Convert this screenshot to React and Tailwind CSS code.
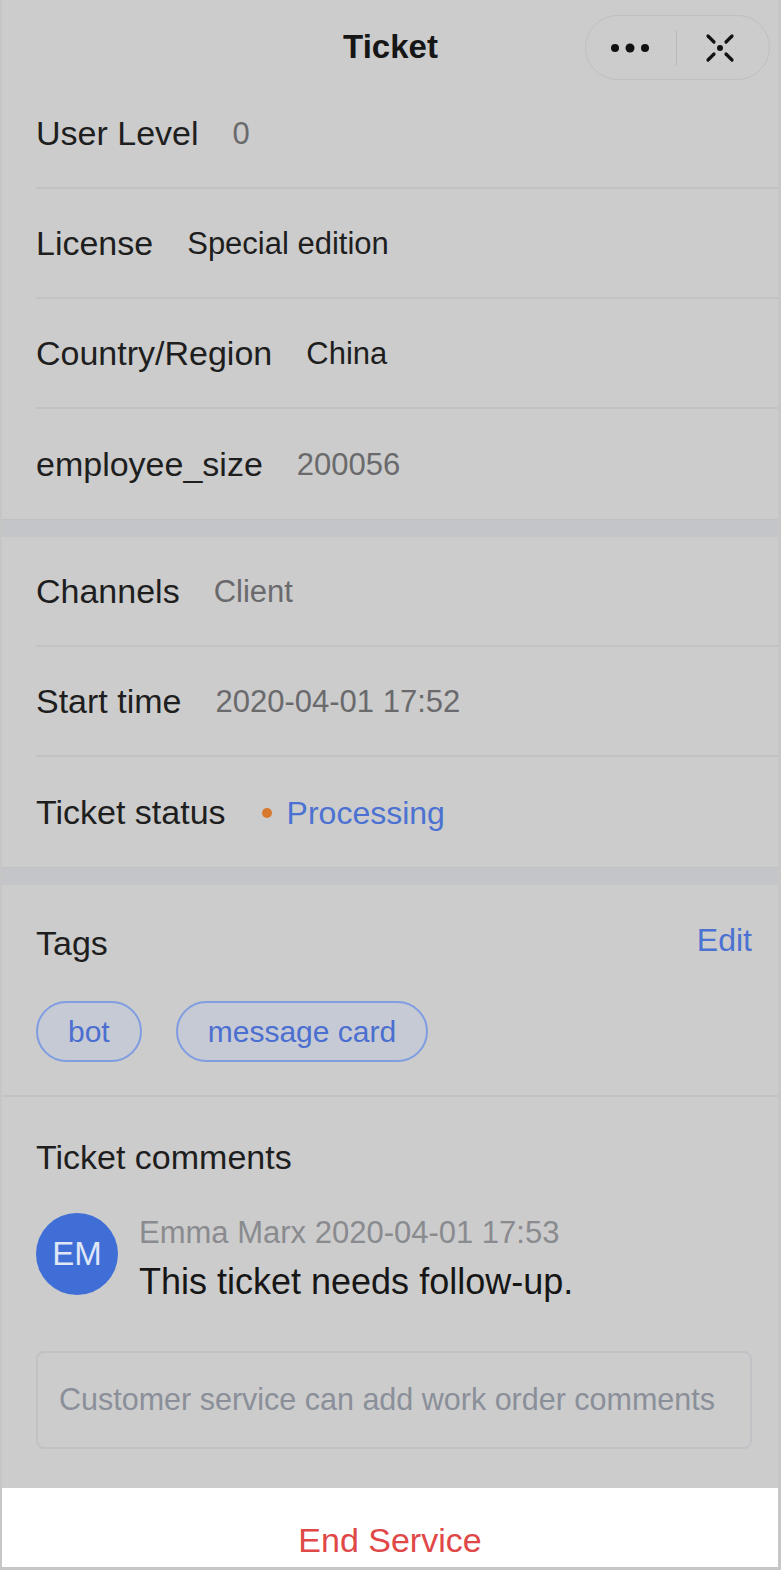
import React from 'react';

const FONT = { fontFamily: '"Liberation Sans", Arial, sans-serif' };

const infoRows = [
  { label: 'User Level', value: '0', tone: 'muted' },
  { label: 'License', value: 'Special edition', tone: 'dark' },
  { label: 'Country/Region', value: 'China', tone: 'dark' },
  { label: 'employee_size', value: '200056', tone: 'muted' },
];

const serviceRows = [
  { label: 'Channels', value: 'Client', tone: 'muted' },
  { label: 'Start time', value: '2020-04-01 17:52', tone: 'muted' },
  { label: 'Ticket status', value: 'Processing', tone: 'status' },
];

const Row = ({ label, value, tone, last }) => (
  <div className="ml-[34px] h-[110px] flex items-center">
    <div className={`flex items-center w-full h-full ${last ? '' : 'border-b-2 border-[#c0c2c6]'}`}>
      <span className="text-[34px] text-[#1e1e1e]">{label}</span>
      {tone === 'status' ? (
        <span className="ml-[36px] flex items-center pt-[2px]">
          <span className="w-[10px] h-[10px] rounded-full bg-[#d8782e]" />
          <span className="ml-[15px] text-[32px] text-[#4b72d2]">{value}</span>
        </span>
      ) : (
        <span
          className={`ml-[34px] pt-[2px] text-[31px] ${tone === 'dark' ? 'text-[#1e1e1e]' : 'text-[#6a6a6c]'}`}
        >
          {value}
        </span>
      )}
    </div>
  </div>
);

const Band = () => <div className="h-[18px] bg-[#c4c5c8] border-t border-[#bfc1c5]" />;

const MoreIcon = () => (
  <svg width="44" height="12" viewBox="0 0 44 12">
    <circle cx="6" cy="6" r="4" fill="#111" />
    <circle cx="21" cy="6" r="4.5" fill="#111" />
    <circle cx="36" cy="6" r="4" fill="#111" />
  </svg>
);

const CloseIcon = () => (
  <svg width="32" height="32" viewBox="0 0 32 32" fill="none" stroke="#111" strokeWidth="3.2" strokeLinecap="round">
    <path d="M4 4 L10 10" />
    <path d="M28 4 L22 10" />
    <path d="M4 28 L10 22" />
    <path d="M28 28 L22 22" />
    <circle cx="16" cy="16" r="3" fill="#111" stroke="none" />
  </svg>
);

const Tag = ({ children }) => (
  <span className="h-[61px] px-[30px] rounded-full border-2 border-[#7f9de0] bg-[#c6cad5] text-[30px] text-[#4b6fd0] flex items-center">
    {children}
  </span>
);

export default function App() {
  return (
    <div className="w-[784px] h-[1574px] bg-white" style={FONT}>
      <div className="w-[781px] h-[1570px] bg-[#cccccc] border-l-2 border-r-[3px] border-b-[3px] border-[#c6c6c6] flex flex-col">
        {/* header */}
        <div className="h-[79px] relative pt-[26px]">
          <div className="text-center text-[33px] leading-[42px] font-semibold text-[#161616] pl-[1px]">Ticket</div>
          <div className="absolute left-[583px] top-[15px] w-[185px] h-[65px] rounded-full border border-[#bfbfc1] flex items-center">
            <div className="w-[90px] flex justify-center">
              <MoreIcon />
            </div>
            <div className="w-[1px] h-[36px] bg-[#b9b9bb]" />
            <div className="flex-1 flex justify-center pr-[6px]">
              <CloseIcon />
            </div>
          </div>
        </div>

        {infoRows.map((r, i) => (
          <Row key={r.label} {...r} last={i === infoRows.length - 1} />
        ))}
        <Band />
        {serviceRows.map((r, i) => (
          <Row key={r.label} {...r} last={i === serviceRows.length - 1} />
        ))}
        <Band />

        {/* tags */}
        <div className="h-[212px] border-b-2 border-[#c0c2c6] px-[34px] pt-[36px]">
          <div className="flex items-center justify-between h-[44px]">
            <span className="text-[34px] text-[#1e1e1e]">Tags</span>
            <span className="text-[32px] text-[#4b72d2] -mr-[8px] -mt-[6px]">Edit</span>
          </div>
          <div className="flex gap-[34px] mt-[36px]">
            <Tag>bot</Tag>
            <Tag>message card</Tag>
          </div>
        </div>

        {/* comments */}
        <div className="flex-1 px-[34px] pt-[38px]">
          <div className="text-[34px] text-[#1e1e1e] h-[44px] flex items-center">Ticket comments</div>
          <div className="flex mt-[34px]">
            <div className="w-[82px] h-[82px] rounded-full bg-[#3f6fd6] text-[#dfe6f6] text-[33px] flex items-center justify-center shrink-0">EM</div>
            <div className="ml-[21px] pt-[2px]">
              <div className="text-[31px] text-[#8a8b8f] leading-[36px]">Emma Marx 2020-04-01 17:53</div>
              <div className="text-[36px] text-[#161616] leading-[42px] mt-[10px]">This ticket needs follow-up.</div>
            </div>
          </div>
          <div className="mt-[48px] h-[98px] w-[716px] rounded-[8px] border-2 border-[#c1c2c5] flex items-center pl-[21px]">
            <span className="text-[30.5px] text-[#8a8f99]">Customer service can add work order comments</span>
          </div>
        </div>

        {/* footer */}
        <div className="h-[79px] bg-white flex items-end justify-center pb-[1px]">
          <span className="text-[34px] text-[#e04848]">End Service</span>
        </div>
      </div>
    </div>
  );
}
